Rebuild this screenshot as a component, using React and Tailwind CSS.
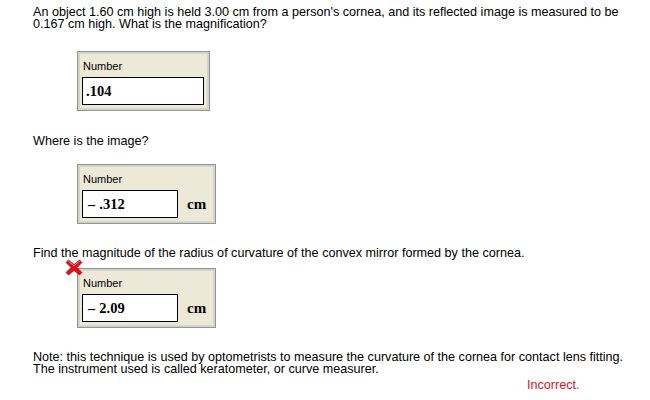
import React from "react";

function RedX() {
  return (
    <svg width="18" height="17" viewBox="0 0 18 17" className="absolute left-[-13px] top-[-10px]">
      <path d="M3.5 1 L9 5.5 L14.5 1 L17 3.5 L12 8.5 L17 13.5 L14.5 16 L9 11.5 L3.5 16 L1 13.5 L6 8.5 L1 3.5 Z" fill="#e3101c" stroke="#9a0a12" strokeWidth="0.7" strokeLinejoin="round" />
      <path d="M3.5 2.2 L9 6.8 L14.5 2.2" fill="none" stroke="#ff9a9a" strokeWidth="0.9" />
    </svg>
  );
}

function Box({ value, neg, unit, wide, x }) {
  return (
    <div className={`relative ml-[44px] border border-[#8d9690] ${unit ? "w-[139px]" : "w-[133px]"}`}>
      {x && <RedX />}
      <div className="border-2 border-[#d3d5cb] bg-[#ece9d8] pl-[2px] pr-[2px] pt-[6px] pb-[3px]">
        <div className="text-[11px] leading-[12px] pl-[1px] text-black">Number</div>
        <div className="flex items-center mt-[5px]">
          <div
            className={`h-[28px] border border-black bg-white flex items-center pl-[3px] ${wide ? "w-[122px]" : "w-[96px]"}`}
            style={{ fontFamily: '"Liberation Serif", "Times New Roman", serif' }}
          >
            {neg && <span className="font-bold text-[14.5px] ml-[2px] mr-[4px]">–</span>}
            <span className="font-bold text-[14.5px]">{value}</span>
          </div>
          {unit && (
            <span
              className="ml-[9px] font-bold text-[15px]"
              style={{ fontFamily: '"Liberation Serif", "Times New Roman", serif' }}
            >
              {unit}
            </span>
          )}
        </div>
      </div>
    </div>
  );
}

export default function App() {
  return (
    <div
      className="w-[650px] h-[400px] bg-white text-black text-[12.6px] leading-[12px] pl-[33px] overflow-hidden"
      style={{ fontFamily: '"Liberation Sans", Arial, sans-serif' }}
    >
      <p className="pt-[6px]">
        An object 1.60 cm high is held 3.00 cm from a person's cornea, and its reflected image is measured to be
        <br />
        0.167 cm high. What is the magnification?
      </p>
      <div className="mt-[21px]">
        <Box value=".104" wide />
      </div>
      <p className="mt-[24px]">Where is the image?</p>
      <div className="mt-[17px]">
        <Box neg value=".312" unit="cm" />
      </div>
      <p className="mt-[23px]">Find the magnitude of the radius of curvature of the convex mirror formed by the cornea.</p>
      <div className="mt-[9px]">
        <Box neg value="2.09" unit="cm" x />
      </div>
      <p className="mt-[23px]">
        Note: this technique is used by optometrists to measure the curvature of the cornea for contact lens fitting.
        <br />
        The instrument used is called keratometer, or curve measurer.
      </p>
      <p className="mt-[4px] pl-[494px] text-[#e0101a]">Incorrect.</p>
    </div>
  );
}
